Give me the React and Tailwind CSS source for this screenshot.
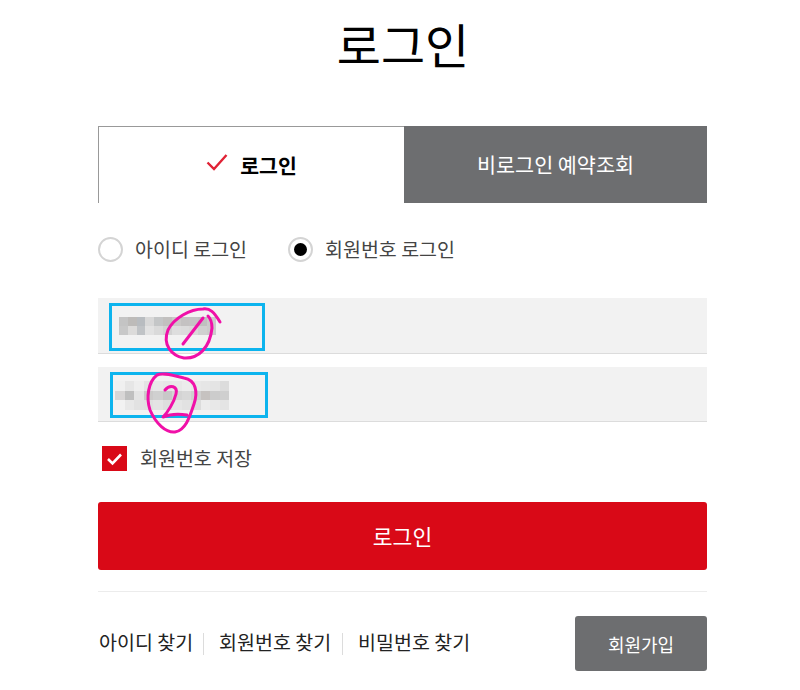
const FONT = "font-['Noto_Sans_CJK_KR','Noto_Sans',sans-serif]"

// mosaic blur over the typed values
const BLUR_ONE = [
  ['#c4c4c4', '#bdbbb9', '#b8bcc0', '#d8d8d8', '#c4c6c7', '#c2c0bf', '#cbc9c8', '#c4c2c2', '#c5c3c4', '#c0c0c0', '#cbcbcb'],
  ['#c8c8c8', '#dcdbda', '#c0c3c6', '#e2e2e2', '#dadada', '#d2d2d2', '#dedede', '#dcdcdc', '#dad8d8', '#d0d0d0', '#cccccc'],
]
const BLUR_TWO = [
  ['#f0f0f0', '#e6e6e6', '#eeeeee', '#e4e4e4', '#e8e8e8', '#e6e6e6', '#e8e8e8', '#ececec', '#e8e8e8', '#e6e6e6', '#e4e4e4', '#dcdcdc'],
  ['#d8d6d6', '#bfbfbf', '#e4e4e4', '#cccaca', '#d0d0d0', '#c8c8c8', '#d4d4d4', '#d8d8d8', '#cfcfcf', '#c6c2c0', '#cccccc', '#cfcfcf'],
  ['#f2f2f2', '#e8e8e8', '#e2e2e2', '#e0e0e0', '#e4e4e4', '#dedede', '#e6e6e6', '#e2e2e2', '#dcdcdc', '#ececec', '#e8e8e8', '#e4e4e4'],
]

function Mosaic({ rows, cell, className }) {
  return (
    <div className={className}>
      {rows.map((row, i) => (
        <div key={i} className="flex">
          {row.map((c, j) => (
            <span key={j} style={{ background: c, width: cell, height: cell }} />
          ))}
        </div>
      ))}
    </div>
  )
}

function Radio({ label, checked }) {
  return (
    <label className="flex items-center gap-[12px]">
      <span className="w-[25px] h-[25px] rounded-full border-2 border-[#d4d4d4] bg-white flex items-center justify-center">
        {checked && <span className="w-[13px] h-[13px] rounded-full bg-black" />}
      </span>
      <span className="text-[19.5px] leading-[25px] text-[#444] -mt-[3px]">{label}</span>
    </label>
  )
}

export default function App() {
  return (
    <div className={`${FONT} relative w-[800px] h-[690px] overflow-hidden bg-white`}>
      <h1 className="text-center text-[48px] leading-[74px] mt-[6px] pl-[6px] text-black font-normal">로그인</h1>

      <div className="mx-[98px] w-[609px] mt-[46px]">
        {/* tabs */}
        <div className="flex h-[77px]">
          <div className="w-[306px] border-t border-l border-[#999] flex items-center justify-center gap-[12px]">
            <svg width="22" height="19" viewBox="0 0 22 19" className="-mt-[6px]">
              <path d="M1.5 9.5 L8 16 L20.5 2" fill="none" stroke="#e02235" strokeWidth="2.4" />
            </svg>
            <span className="text-[20.5px] font-bold text-black">로그인</span>
          </div>
          <div className="flex-1 bg-[#6d6e70] flex items-center justify-center text-[20.7px] text-white">
            비로그인 예약조회
          </div>
        </div>

        {/* login type */}
        <div className="flex gap-[41px] mt-[34px]">
          <Radio label="아이디 로그인" />
          <Radio label="회원번호 로그인" checked />
        </div>

        {/* inputs */}
        <div className="relative mt-[36px] h-[56px] bg-[#f2f2f2] border-b border-[#dcdcdc]">
          <Mosaic rows={BLUR_ONE} cell={8.8} className="absolute left-[21px] top-[19px]" />
        </div>
        <div className="relative mt-[13px] h-[55px] bg-[#f2f2f2] border-b border-[#dcdcdc]">
          <Mosaic rows={BLUR_TWO} cell={9.5} className="absolute left-[17px] top-[14px]" />
        </div>

        {/* remember */}
        <div className="flex items-center gap-[13px] h-[25px] mt-[24px] ml-[4px]">
          <span className="w-[25px] h-[25px] bg-[#d90917] flex items-center justify-center">
            <svg width="17" height="14" viewBox="0 0 17 14">
              <path d="M2 7 L6.5 11.5 L15 2.5" fill="none" stroke="#fff" strokeWidth="2.6" />
            </svg>
          </span>
          <span className="text-[19.5px] leading-[25px] text-[#444] -mt-[3px]">회원번호 저장</span>
        </div>

        <button className="block w-full h-[68px] mt-[31px] bg-[#d90917] rounded-[3px] text-white text-[21.5px] leading-[30px]">로그인</button>

        <div className="h-px bg-[#ececec] mt-[21px]" />

        {/* footer links */}
        <div className="flex items-center justify-between mt-[24px]">
          <div className="flex items-center text-[19.5px] leading-[28px] text-[#222] -mt-[3px] ml-px">
            <span>아이디 찾기</span>
            <span className="w-px h-[22px] bg-[#dcdcdc] ml-[10px] mr-[15px] mt-[4px]" />
            <span>회원번호 찾기</span>
            <span className="w-px h-[22px] bg-[#dcdcdc] ml-[11px] mr-[15px] mt-[4px]" />
            <span>비밀번호 찾기</span>
          </div>
          <button className="w-[132px] h-[55px] bg-[#6d6e70] rounded-[3px] text-white text-[18px] leading-[26px]">회원가입</button>
        </div>
      </div>

      {/* hand drawn annotations on top of the capture */}
      <div className="absolute left-[109px] top-[303px] w-[156px] h-[48px] border-[3px] border-[#0db4ee]" />
      <div className="absolute left-[110px] top-[372px] w-[158px] h-[46px] border-[3px] border-[#0db4ee]" />
      <svg width="800" height="690" viewBox="0 0 800 690" className="absolute inset-0 pointer-events-none">
        <g fill="none" stroke="#f010a8" strokeWidth="3" strokeLinecap="round" strokeLinejoin="round">
          <path d="M220 322 C214 312 210 308 203 309 C190 309 174 318 168 330 C162 345 172 356 184 358 C198 359 210 348 212 328 C212 322 210 318 208 316" />
          <path d="M183 344 L203 318" />
          <path d="M157 375 C148 382 146 398 150 410 C156 424 166 433 175 432 C186 430 190 416 194 404 C198 392 196 380 184 378 C174 376 164 372 157 375" />
          <path d="M165 390 C170 384 178 386 176 394 C174 402 168 412 163 417 C170 414 180 414 187 415" />
        </g>
      </svg>
    </div>
  )
}
